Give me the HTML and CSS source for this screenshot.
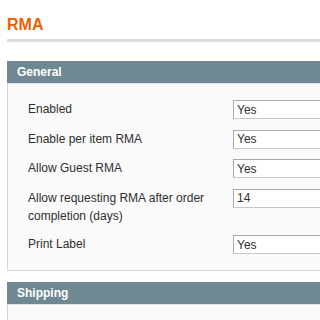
FILE: index.html
```html
<!DOCTYPE html>
<html lang="en">
<head>
    <meta charset="UTF-8">
    <meta name="viewport" content="width=device-width, initial-scale=1.0">
    <title>RMA</title>
    <link rel="stylesheet" href="styles.css">
</head>

<body>
    <div class="page">
        <h3 class="title">RMA</h3>
        <div class="rule"></div>

        <div class="section">
            <div class="section-head">General</div>
            <div class="fieldset">
                <div class="row">
                    <label class="label" for="enabled">Enabled</label>
                    <select class="select" id="enabled">
                        <option selected>Yes</option>
                        <option>No</option>
                    </select>
                </div>
                <div class="row">
                    <label class="label" for="per-item">Enable per item RMA</label>
                    <select class="select" id="per-item">
                        <option selected>Yes</option>
                        <option>No</option>
                    </select>
                </div>
                <div class="row">
                    <label class="label" for="guest">Allow Guest RMA</label>
                    <select class="select" id="guest">
                        <option selected>Yes</option>
                        <option>No</option>
                    </select>
                </div>
                <div class="row">
                    <label class="label" for="days">Allow requesting RMA after order completion (days)</label>
                    <input class="select" id="days" type="text" value="14">
                </div>
                <div class="row">
                    <label class="label" for="print">Print Label</label>
                    <select class="select" id="print">
                        <option selected>Yes</option>
                        <option>No</option>
                    </select>
                </div>
            </div>
        </div>

        <div class="section">
            <div class="section-head">Shipping</div>
            <div class="fieldset">
                <div class="row">
                    <span class="label"></span>
                    <div class="select"></div>
                </div>
            </div>
        </div>
    </div>
</body>
</html>
```

FILE: styles.css
```css
body {
    margin: 0;
    padding: 0;
    background-color: #fff;
    font-family: "Liberation Sans", Arial, sans-serif;
    font-size: 12px;
    color: #2f2f2f;
    overflow: hidden;
}

.page {
    width: 420px;
    padding: 0 7px;
}

.title {
    margin: 0 0 4px 0;
    padding-top: 15px;
    font-size: 16px;
    line-height: 20px;
    font-weight: bold;
    color: #eb5e00;
}

.rule {
    height: 3px;
    background-color: #ddd;
    margin-bottom: 19px;
}

.section {
    margin-bottom: 11px;
}

.section-head {
    height: 22px;
    line-height: 22px;
    padding: 0 10px;
    background-color: #6f8992;
    color: #fff;
    font-weight: bold;
    border-bottom: 1px solid #dfe6e8;
}

.fieldset {
    background-color: #fafafa;
    border: 1px solid #d6d6d6;
    border-top: none;
    padding: 16px 0 16px 20px;
    display: flex;
    flex-direction: column;
    gap: 10.5px;
}

.row {
    display: flex;
    align-items: flex-start;
}

.label {
    flex-shrink: 0;
    width: 205px;
    line-height: 18px;
    padding-right: 4px;
    box-sizing: border-box;
}

.select {
    flex-shrink: 0;
    -webkit-appearance: none;
    appearance: none;
    width: 280px;
    height: 19px;
    margin: 0;
    padding: 0 3px;
    border: 1px solid #aaa;
    border-bottom-color: #c6c6c6;
    border-right-color: #c6c6c6;
    border-radius: 0;
    background-color: #fff;
    font-family: "Liberation Sans", Arial, sans-serif;
    font-size: 12px;
    color: #2f2f2f;
    box-sizing: border-box;
    outline: none;
}
```
